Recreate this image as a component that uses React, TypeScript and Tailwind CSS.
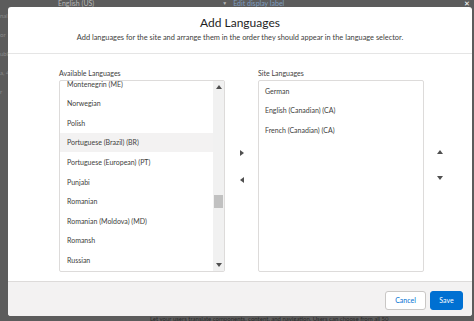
import React from 'react';

const available = [
  'Montenegrin (ME)',
  'Norwegian',
  'Polish',
  'Portuguese (Brazil) (BR)',
  'Portuguese (European) (PT)',
  'Punjabi',
  'Romanian',
  'Romanian (Moldova) (MD)',
  'Romansh',
  'Russian',
];

const site = ['German', 'English (Canadian) (CA)', 'French (Canadian) (CA)'];

const Tri: React.FC<{ dir: 'up' | 'down' | 'left' | 'right'; className?: string }> = ({ dir, className }) => {
  const pts = {
    up: '0,4 3,0 6,4',
    down: '0,0 6,0 3,4',
    right: '0,0 4,3 0,6',
    left: '4,0 0,3 4,6',
  }[dir];
  const vertical = dir === 'up' || dir === 'down';
  return (
    <svg width={vertical ? 6 : 4} height={vertical ? 4 : 6} viewBox={vertical ? '0 0 6 4' : '0 0 4 6'} className={className}>
      <polygon points={pts} fill="currentColor" />
    </svg>
  );
};

const App: React.FC = () => {
  return (
    <div className="relative w-[474px] h-[321px] overflow-hidden bg-[#5c5c5c] font-['Lato','Liberation_Sans',sans-serif] text-[#3e3e3c]">
      {/* page behind the modal */}
      <div className="flex items-center h-[7px] text-[7px] leading-none">
        <span className="ml-[58px] text-[#b8b8b8]">English (US)</span>
        <span className="ml-[128px] text-[#b8b8b8] text-[5px]">▼</span>
        <span className="ml-[6px] text-[#7f9ec0]">Edit display label</span>
      </div>
      <div className="flex flex-col gap-[13px] pt-[6px] text-[6px] text-[#8a8a8a] leading-none">
        <span>nal</span>
        <span>or</span>
        <span>ubl</span>
        <span>a, 4</span>
        <span>r</span>
      </div>
      <div className="absolute left-[150px] bottom-0 h-[5px] text-[6px] leading-none text-[#2a2a2a] whitespace-nowrap">
        Let your users translate components, content, and navigation. Users can choose from all 50
      </div>
      <span className="absolute right-[4px] top-0 text-[7px] text-white leading-none">✕</span>

      {/* modal */}
      <div className="absolute left-[8px] top-[7px] w-[464px] h-[309px] bg-white rounded-[3px] flex flex-col overflow-hidden">
        <div className="flex flex-col items-center pt-[8px] pb-[10px] border-b border-[#e5e5e5]">
          <h2 className="text-[12px] leading-[16px] font-normal text-[#1e1e1e]">Add Languages</h2>
          <p className="mt-[2px] text-[7.4px] leading-[10px]">
            Add languages for the site and arrange them in the order they should appear in the language selector.
          </p>
        </div>

        <div className="flex-1 flex pl-[51px] pt-[14px] text-[7px]">
          {/* available */}
          <div className="flex flex-col">
            <label className="leading-[10px] h-[10px]">Available Languages</label>
            <div className="mt-[2px] w-[166px] h-[192px] border border-[#dddbda] rounded-[2px] flex overflow-hidden">
              <div className="flex-1 overflow-hidden">
                <ul className="mt-[-7px]">
                  {available.map((l) => (
                    <li
                      key={l}
                      className={`h-[19.6px] flex items-center px-[7px] ${l === 'Portuguese (Brazil) (BR)' ? 'bg-[#f3f2f2]' : ''}`}
                    >
                      {l}
                    </li>
                  ))}
                </ul>
              </div>
              <div className="w-[11px] bg-[#f1f1f1] flex flex-col items-center text-[#505050]">
                <Tri dir="up" className="mt-[4px]" />
                <div className="mt-[106px] w-[9px] h-[13px] bg-[#c1c1c1]" />
                <div className="flex-1" />
                <Tri dir="down" className="mb-[4px]" />
              </div>
            </div>
          </div>

          {/* move buttons */}
          <div className="w-[33px] flex flex-col items-center pt-[82px] gap-[21px] text-[#505050]">
            <Tri dir="right" />
            <Tri dir="left" />
          </div>

          {/* site */}
          <div className="flex flex-col">
            <label className="leading-[10px] h-[10px]">Site Languages</label>
            <div className="mt-[2px] w-[166px] h-[192px] border border-[#dddbda] rounded-[2px]">
              <ul>
                {site.map((l) => (
                  <li key={l} className="h-[19.6px] flex items-center px-[6px]">
                    {l}
                  </li>
                ))}
              </ul>
            </div>
          </div>

          {/* order buttons */}
          <div className="w-[32px] flex flex-col items-center pt-[82px] gap-[22px] text-[#505050]">
            <Tri dir="up" />
            <Tri dir="down" />
          </div>
        </div>

        <div className="h-[35px] bg-[#f3f2f2] border-t border-[#dddbda] flex items-start justify-end gap-[4px] pt-[9px] pr-[9px] text-[7px]">
          <button className="w-[41px] h-[19px] bg-white border border-[#c9c7c5] rounded-[3px] text-[#0070d2]">Cancel</button>
          <button className="w-[33px] h-[19px] bg-[#0070d2] border border-[#0070d2] rounded-[3px] text-white">Save</button>
        </div>
      </div>
    </div>
  );
};

export default App;
